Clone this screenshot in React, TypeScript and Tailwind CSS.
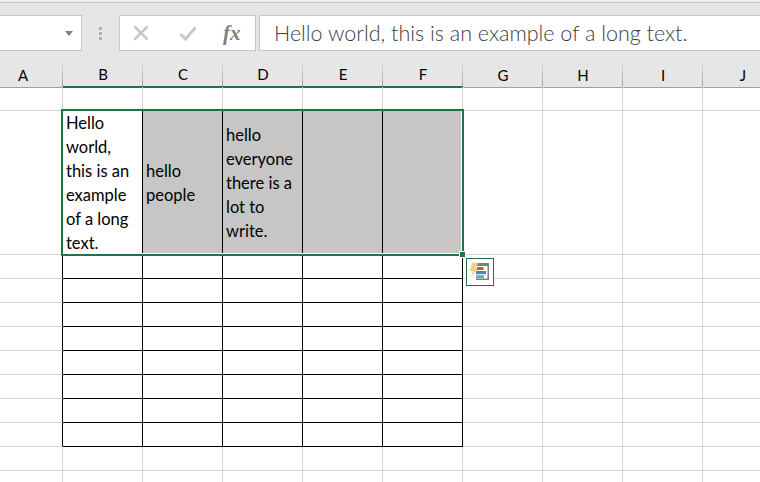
const columns = ['A', 'B', 'C', 'D', 'E', 'F', 'G', 'H', 'I', 'J'];
const selectedColumns = ['B', 'C', 'D', 'E', 'F'];
const gridColumns = 'grid grid-cols-[63px_repeat(8,80px)_57px]';

function QuickAnalysisIcon() {
  return (
    <svg width="26" height="26" viewBox="0 0 26 26">
      <path d="M9 4h13v17H9v-1.500h11.500V7H9z" fill="#7f7f7f" />
      <path d="M5.500 3.500h6L8.500 9.500h2.500L3 19l3-7H2.500z" fill="#f5cf87" />
      <rect x="10" y="8" width="6.500" height="3" fill="#d8563a" />
      <rect x="9" y="12" width="10" height="3.200" fill="#4f81bd" />
      <rect x="9" y="16.200" width="8" height="3" fill="#70ad9b" />
    </svg>
  );
}

function FormulaBar() {
  return (
    <div className="h-[61px] flex items-start pt-3 border-t border-[#c6c6c6] bg-[#e6e6e6]">
      <div className="w-[82px] h-9 flex items-center justify-end pr-2 bg-white border border-l-0 border-[#c6c6c6]">
        <svg width="8" height="5" viewBox="0 0 8 5">
          <path d="M0 0h8L4 5z" fill="#7f7f7f" />
        </svg>
      </div>
      <div className="w-[37px] h-9 flex flex-col items-center justify-center gap-0.5">
        <span className="w-[3px] h-[3px] bg-[#b0b0b0]" />
        <span className="w-[3px] h-[3px] bg-[#b0b0b0]" />
        <span className="w-[3px] h-[3px] bg-[#b0b0b0]" />
      </div>
      <div className="w-[137px] h-9 flex items-center bg-white border border-[#c6c6c6]">
        <svg className="ml-[13px]" width="16" height="16" viewBox="0 0 16 16">
          <path d="M1.500 1.500l13 13M14.500 1.500l-13 13" stroke="#c8c8c8" strokeWidth="2.500" fill="none" />
        </svg>
        <svg className="ml-[30px]" width="18" height="16" viewBox="0 0 18 16">
          <path d="M1.500 9l5 5L16.500 2.500" stroke="#c8c8c8" strokeWidth="3" fill="none" />
        </svg>
        <span className="ml-[26px] font-['Liberation_Serif',serif] italic font-bold text-[21px] leading-none text-[#808080]">
          fx
        </span>
      </div>
      <div className="ml-[3px] flex-1 h-9 flex items-center pl-[14px] bg-white border border-r-0 border-[#c6c6c6] font-['Lato',sans-serif] font-light text-[21.500px] text-[#404040] whitespace-nowrap overflow-hidden">
        Hello world, this is an example of a long text.
      </div>
    </div>
  );
}

function ColumnHeaders() {
  return (
    <div className={`${gridColumns} h-6 bg-[#e6e6e6] font-['Lato',sans-serif] text-[15px] text-black`}>
      {columns.map((col) => (
        <div
          key={col}
          className={`flex items-center justify-center border-b bg-[linear-gradient(#e0e0e0,#a0a0a0)] bg-[length:1px_100%] bg-right bg-no-repeat ${
            selectedColumns.includes(col) ? 'border-b-2 border-[#217346]' : 'border-[#9f9f9f]'
          } ${col === 'A' ? 'pr-[17px]' : ''} ${col === 'J' ? 'pl-[23px] bg-none' : ''}`}
        >
          {col}
        </div>
      ))}
    </div>
  );
}

function BlankRow({ bordered, height = 'h-6' }: { bordered?: boolean; height?: string }) {
  return (
    <div className={`${gridColumns} ${height}`}>
      {columns.map((col) => {
        const inTable = bordered && selectedColumns.includes(col);
        return (
          <div
            key={col}
            className={`border-b border-r ${inTable ? 'border-black' : 'border-[#d4d4d4]'} ${
              bordered && col === 'A' ? 'border-r-black' : ''
            } ${col === 'J' ? 'border-r-0' : ''}`}
          />
        );
      })}
    </div>
  );
}

function TextCell({ lines, shaded }: { lines: string[]; shaded?: boolean }) {
  return (
    <div className={`flex flex-col justify-center pl-[3px] border-r border-black ${shaded ? 'bg-[#c6c6c6]' : 'bg-white'}`}>
      {lines.map((line) => (
        <div key={line} className="h-6 leading-6 whitespace-nowrap">
          {line}
        </div>
      ))}
    </div>
  );
}

function HeaderRow() {
  return (
    <div className={`${gridColumns} h-36 font-['Lato',sans-serif] text-[16.500px] text-black`}>
      <div className="border-b border-r border-[#d4d4d4]" />
      <TextCell lines={['Hello', 'world,', 'this is an', 'example', 'of a long', 'text.']} />
      <TextCell shaded lines={['hello', 'people']} />
      <TextCell shaded lines={['hello', 'everyone', 'there is a', 'lot to', 'write.']} />
      <TextCell shaded lines={[]} />
      <TextCell shaded lines={[]} />
      <div className="border-b border-r border-[#d4d4d4]" />
      <div className="border-b border-r border-[#d4d4d4]" />
      <div className="border-b border-r border-[#d4d4d4]" />
      <div className="border-b border-[#d4d4d4]" />
    </div>
  );
}

export default function App() {
  return (
    <div className="w-[760px] h-[482px] overflow-hidden bg-white">
      <div className="h-0.5 bg-[#efefef]" />
      <FormulaBar />
      <ColumnHeaders />
      <div className="relative">
        <BlankRow />
        <HeaderRow />
        {[0, 1, 2, 3, 4, 5, 6, 7].map((row) => (
          <BlankRow key={row} bordered />
        ))}
        <BlankRow />
        <BlankRow />

        {/* selection box + fill handle + quick analysis button */}
        <div className="absolute left-[61px] top-[22px] w-[403px] h-[147px] border-2 border-[#217346] pointer-events-none">
          <div className="absolute inset-0 border-r border-b border-white" />
        </div>
        <div className="absolute left-[459px] top-[164px] w-[7px] h-[7px] bg-[#217346] border border-white" />
        <div className="absolute left-[466px] top-[171px] w-7 h-7 flex items-center justify-center bg-white border border-[#217346]">
          <QuickAnalysisIcon />
        </div>
      </div>
    </div>
  );
}
